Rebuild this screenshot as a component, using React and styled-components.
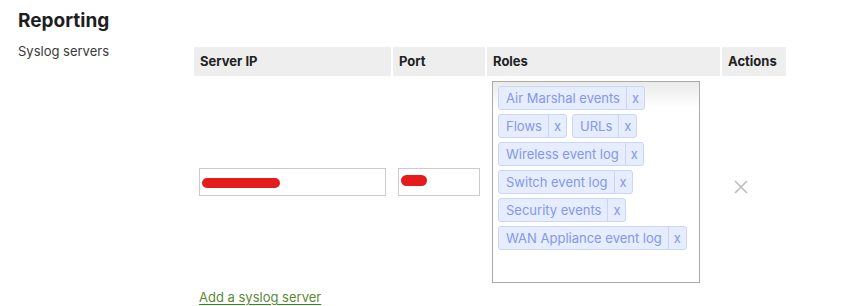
import React from "react";
import styled, { createGlobalStyle } from "styled-components";

const Global = createGlobalStyle`
  html, body { margin: 0; padding: 0; background: #fff; }
  body { font-family: Inter, "Noto Sans", Arial, sans-serif; color: #222; }
`;

const Page = styled.div`
  padding: 9px 18px 0 18px;
`;

const Heading = styled.h2`
  margin: 0 0 10px 0;
  font-size: 19px;
  line-height: 24px;
  font-weight: 700;
  color: #1e1e1e;
`;

const Section = styled.div`
  display: flex;
  align-items: flex-start;
`;

const Label = styled.div`
  width: 174px;
  font-size: 13px;
  line-height: 16px;
  color: #3a3a3a;
`;

const Main = styled.div`
  display: flex;
  flex-direction: column;
  margin-top: 4px;
`;

const Grid = styled.div`
  display: grid;
  grid-template-columns: 197px 92px 233px 64px;
  column-gap: 2px;
  row-gap: 5px;
  margin-left: 2px;
`;

const HeadCell = styled.div`
  background: #eeeeee;
  height: 29px;
  display: flex;
  align-items: center;
  padding-left: 6px;
  padding-bottom: 1px;
  box-sizing: border-box;
  font-size: 13px;
  font-weight: 700;
  color: #222;
`;

const Cell = styled.div`
  display: flex;
  align-items: center;
  padding: 0 5px;
`;

const Field = styled.div`
  box-sizing: border-box;
  width: ${(p) => p.$width}px;
  height: 28px;
  border: 1px solid #cccccc;
  background: #fff;
  display: flex;
  align-items: center;
  padding-left: 2px;
`;

const Redaction = styled.span`
  display: block;
  width: ${(p) => p.$width}px;
  height: ${(p) => p.$height}px;
  border-radius: 6px;
  background: #e41c1c;
  margin-top: ${(p) => p.$offset || 0}px;
`;

const RolesBox = styled.div`
  box-sizing: border-box;
  width: 208px;
  height: 202px;
  border: 1px solid #aaaaaa;
  background: linear-gradient(to bottom, #eaeaea 0px, #ffffff 26px);
  padding: 4px 5px;
  display: flex;
  flex-wrap: wrap;
  align-content: flex-start;
  column-gap: 5px;
  row-gap: 4px;
`;

const Tag = styled.div`
  box-sizing: border-box;
  height: 24px;
  display: flex;
  align-items: stretch;
  border: 1px solid #c9d6fa;
  border-radius: 3px;
  background: #e6edfe;
  color: #8597ee;
  font-size: 13px;
`;

const TagText = styled.span`
  display: flex;
  align-items: center;
  padding: 0 6px 0 7px;
`;

const TagClose = styled.span`
  display: flex;
  align-items: center;
  padding: 0 5px;
  border-left: 1px solid #c9d6fa;
`;

const RemoveButton = styled.button`
  border: none;
  background: none;
  padding: 0 0 0 7px;
  margin-top: 10px;
  cursor: pointer;
  display: flex;
`;

const AddLink = styled.a`
  margin: 6px 0 0 7px;
  font-size: 13px;
  line-height: 16px;
  color: #5a8a36;
  text-decoration: underline;
  text-decoration-color: #2f8a1e;
  text-underline-offset: 2px;
`;

const roles = [
  "Air Marshal events",
  "Flows",
  "URLs",
  "Wireless event log",
  "Switch event log",
  "Security events",
  "WAN Appliance event log",
];

export default function App() {
  return (
    <Page>
      <Global />
      <Heading>Reporting</Heading>
      <Section>
        <Label>Syslog servers</Label>
        <Main>
          <Grid>
            <HeadCell>Server IP</HeadCell>
            <HeadCell>Port</HeadCell>
            <HeadCell>Roles</HeadCell>
            <HeadCell>Actions</HeadCell>

            <Cell>
              <Field $width={187}>
                <Redaction $width={78} $height={10} $offset={2} />
              </Field>
            </Cell>
            <Cell>
              <Field $width={82}>
                <Redaction $width={26} $height={11} $offset={-3} />
              </Field>
            </Cell>
            <Cell>
              <RolesBox>
                {roles.map((r) => (
                  <Tag key={r}>
                    <TagText>{r}</TagText>
                    <TagClose>x</TagClose>
                  </Tag>
                ))}
              </RolesBox>
            </Cell>
            <Cell>
              <RemoveButton aria-label="Remove">
                <svg width="14" height="14" viewBox="0 0 14 14">
                  <path d="M1 1 L13 13 M13 1 L1 13" stroke="#bdbdbd" strokeWidth="1.6" fill="none" />
                </svg>
              </RemoveButton>
            </Cell>
          </Grid>
          <AddLink href="#">Add a syslog server</AddLink>
        </Main>
      </Section>
    </Page>
  );
}
